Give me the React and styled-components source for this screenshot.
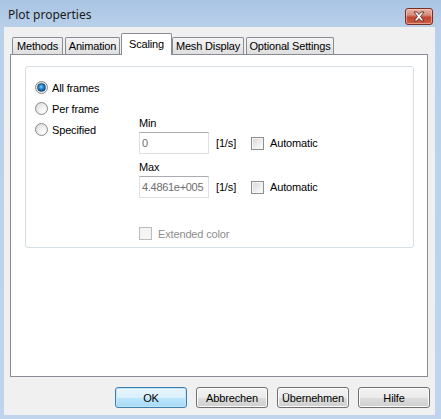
import styled, { createGlobalStyle } from 'styled-components'

const GlobalStyle = createGlobalStyle`
  html, body {
    margin: 0;
    padding: 0;
  }
  body {
    font-family: "Liberation Sans", Arial, sans-serif;
    font-size: 11px;
    letter-spacing: -0.15px;
    color: #000;
  }
  * {
    box-sizing: border-box;
  }
`

const Window = styled.div`
  width: 441px;
  height: 419px;
  display: flex;
  flex-direction: column;
  overflow: hidden;
  background: linear-gradient(180deg, #a8c3e2 0%, #b9d0ea 27px, #c0d5ed 100%);
`

const TitleBar = styled.div`
  height: 27px;
  flex: none;
  display: flex;
  justify-content: space-between;
  align-items: flex-start;
  padding: 0 8px 0 8px;
`

const Title = styled.div`
  font-family: "Noto Sans", "Open Sans", sans-serif;
  font-size: 12px;
  letter-spacing: 0;
  margin-top: 6px;
  color: #1b1b1b;
`

const CloseButton = styled.div`
  width: 28px;
  height: 17px;
  margin-top: 8px;
  border: 1px solid #7a2d22;
  border-radius: 3px;
  background: linear-gradient(180deg, #e9b2a5 0%, #d98c7c 40%, #c0452f 55%, #cf5e45 100%);
  box-shadow: inset 0 0 0 1px rgba(255, 220, 210, 0.5);
  display: flex;
  align-items: center;
  justify-content: center;
`

const Frame = styled.div`
  flex: 1;
  display: flex;
  padding: 0 6px 4px 4px;
`

const Client = styled.div`
  flex: 1;
  display: flex;
  flex-direction: column;
  background: #f0f0f0;
  padding: 6px 7px 7px 6px;
`

const TabStrip = styled.div`
  height: 21px;
  flex: none;
  display: flex;
  align-items: flex-end;
  padding-left: 2px;
  position: relative;
  z-index: 1;
`

const Tab = styled.div`
  width: ${(p) => p.w}px;
  height: ${(p) => (p.active ? 22 : 17)}px;
  margin: ${(p) => (p.active ? '0 0 -1px -1px' : '0 2px 0 0')};
  border: 1px solid #898c95;
  border-bottom: none;
  border-radius: 2px 2px 0 0;
  background: ${(p) =>
    p.active ? '#fff' : 'linear-gradient(180deg, #f3f3f3 0%, #ebebeb 50%, #dedede 100%)'};
  display: flex;
  align-items: center;
  justify-content: center;
  padding-bottom: ${(p) => (p.active ? 2 : 0)}px;
  white-space: nowrap;
`

const Panel = styled.div`
  flex: 1;
  position: relative;
  background: #fff;
  border: 1px solid #898c95;
  padding: 11px 13px 0 14px;
`

const Group = styled.div`
  height: 182px;
  border: 1px solid #d5dfe5;
  border-radius: 3px;
  display: flex;
  padding: 10px 0 0 9px;
`

const RadioColumn = styled.div`
  width: 104px;
  display: flex;
  flex-direction: column;
`

const OptionRow = styled.label`
  height: 21px;
  display: flex;
  align-items: center;
  gap: 4px;
  color: ${(p) => (p.disabled ? '#8d8d8d' : '#000')};
`

const Radio = styled.span`
  width: 13px;
  height: 13px;
  flex: none;
  border-radius: 50%;
  border: 1px solid #8a8a8a;
  background: radial-gradient(circle at 65% 70%, #ffffff 0%, #e9e9e9 55%, #cfcfcf 100%);
  display: flex;
  align-items: center;
  justify-content: center;

  &::after {
    content: '';
    display: ${(p) => (p.checked ? 'block' : 'none')};
    width: 7px;
    height: 7px;
    border-radius: 50%;
    border: 1px solid #1c5180;
    background: radial-gradient(circle at 45% 40%, #7fd0ff 0%, #1f7cc2 45%, #0b3f6a 100%);
  }
`

const RangeColumn = styled.div`
  display: flex;
  flex-direction: column;
  padding-top: 40px;
`

const FieldLabel = styled.div`
  height: 13px;
  line-height: 13px;
  margin-top: ${(p) => p.mt || 0}px;
`

const FieldRow = styled.div`
  height: 22px;
  margin-top: 2px;
  display: flex;
  align-items: center;
`

const TextBox = styled.div`
  width: 70px;
  height: 22px;
  border: 1px solid #dbdfe6;
  border-top-color: #abadb3;
  background: #fff;
  color: #6d6d6d;
  padding: 0 2px;
  display: flex;
  align-items: center;
  white-space: nowrap;
  overflow: hidden;
  letter-spacing: -0.3px;
`

const Unit = styled.span`
  width: 42px;
  padding-left: 7px;
`

const Check = styled.span`
  width: 13px;
  height: 13px;
  flex: none;
  border: 1px solid ${(p) => (p.disabled ? '#bcbcbc' : '#8e8f8f')};
  box-shadow: inset 0 0 0 1px #f4f4f4;
  background: ${(p) =>
    p.disabled ? '#f4f4f4' : 'linear-gradient(135deg, #d6d6d6 0%, #efefef 60%, #fbfbfb 100%)'};
`

const CheckRow = styled.label`
  display: flex;
  align-items: center;
  gap: 6px;
  height: 13px;
  margin-top: ${(p) => p.mt || 0}px;
  color: ${(p) => (p.disabled ? '#8d8d8d' : '#000')};
`

const ButtonRow = styled.div`
  flex: none;
  display: flex;
  justify-content: flex-end;
  gap: 9px;
  margin: 10px -2px 0 0;
`

const Button = styled.div`
  width: 72px;
  height: 21px;
  border: 1px solid ${(p) => (p.primary ? '#3c7fb1' : '#707070')};
  border-radius: 3px;
  background: ${(p) =>
    p.primary
      ? 'linear-gradient(180deg, #eaf6fd 0%, #d9f0fc 50%, #bee6fd 51%, #a7d9f5 100%)'
      : 'linear-gradient(180deg, #f2f2f2 0%, #ebebeb 50%, #dddddd 51%, #cfcfcf 100%)'};
  box-shadow: inset 0 0 0 1px ${(p) => (p.primary ? '#c4e5f6' : '#fcfcfc')};
  display: flex;
  align-items: center;
  justify-content: center;
`

const CloseIcon = () => (
  <svg width="12" height="11" viewBox="0 0 12 11">
    <path
      d="M1 1 H4 L6 3.5 L8 1 H11 L7.6 5.5 L11 10 H8 L6 7.5 L4 10 H1 L4.4 5.5 Z"
      fill="#fff"
      stroke="#5a2a24"
      strokeWidth="0.9"
      strokeLinejoin="round"
    />
  </svg>
)

const tabs = [
  { label: 'Methods', w: 51 },
  { label: 'Animation', w: 55 },
  { label: 'Scaling', w: 51, active: true },
  { label: 'Mesh Display', w: 72 },
  { label: 'Optional Settings', w: 88 },
]

export default function App() {
  return (
    <>
      <GlobalStyle />
      <Window>
        <TitleBar>
          <Title>Plot properties</Title>
          <CloseButton>
            <CloseIcon />
          </CloseButton>
        </TitleBar>
        <Frame>
          <Client>
            <TabStrip>
              {tabs.map((t) => (
                <Tab key={t.label} w={t.w} active={t.active}>
                  {t.label}
                </Tab>
              ))}
            </TabStrip>
            <Panel>
              <Group>
                <RadioColumn>
                  <OptionRow>
                    <Radio checked />
                    All frames
                  </OptionRow>
                  <OptionRow>
                    <Radio />
                    Per frame
                  </OptionRow>
                  <OptionRow>
                    <Radio />
                    Specified
                  </OptionRow>
                </RadioColumn>
                <RangeColumn>
                  <FieldLabel>Min</FieldLabel>
                  <FieldRow>
                    <TextBox>0</TextBox>
                    <Unit>[1/s]</Unit>
                    <CheckRow>
                      <Check />
                      Automatic
                    </CheckRow>
                  </FieldRow>
                  <FieldLabel mt={7}>Max</FieldLabel>
                  <FieldRow>
                    <TextBox>4.4861e+005</TextBox>
                    <Unit>[1/s]</Unit>
                    <CheckRow>
                      <Check />
                      Automatic
                    </CheckRow>
                  </FieldRow>
                  <CheckRow mt={29} disabled>
                    <Check disabled />
                    Extended color
                  </CheckRow>
                </RangeColumn>
              </Group>
            </Panel>
            <ButtonRow>
              <Button primary>OK</Button>
              <Button>Abbrechen</Button>
              <Button>Übernehmen</Button>
              <Button>Hilfe</Button>
            </ButtonRow>
          </Client>
        </Frame>
      </Window>
    </>
  )
}
